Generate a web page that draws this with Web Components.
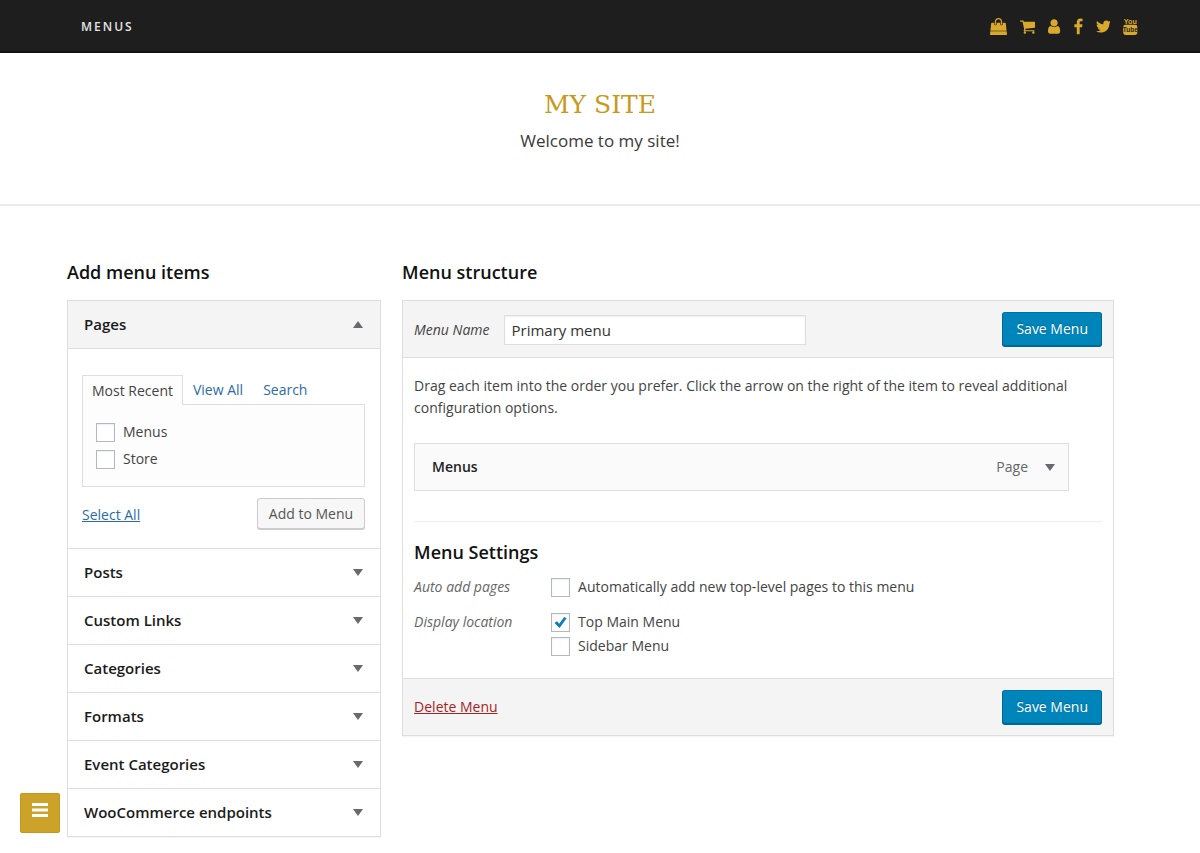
<!DOCTYPE html>
<html lang="en">
<head>
  <meta charset="utf-8">
  <meta name="viewport" content="width=device-width, initial-scale=1">
  <title>Menus</title>
  <style>
    body {
      margin: 0;
      background: #fff;
      color: #444;
      font: 14px/22px "Open Sans", "Noto Sans", sans-serif;
      --gold: #d9a92b;
      --line: #dedede;
      --link: #2a6ca8;
    }
  </style>
</head>
<body>
  <site-topbar>Menus</site-topbar>
  <site-header>
    <span slot="title">MY SITE</span>
    Welcome to my site!
  </site-header>
  <menu-editor></menu-editor>
  <panel-toggle></panel-toggle>

  <script>
    class BaseElement extends HTMLElement {
      constructor() {
        super();
        this.attachShadow({ mode: "open" });
      }

      connectedCallback() {
        this.shadowRoot.innerHTML = `
          <style>
            * { box-sizing: border-box; }
            a { color: inherit; }
            ${this.styles()}
          </style>
          ${this.html()}
        `;
      }

      styles() {
        return "";
      }

      html() {
        return "<slot></slot>";
      }
    }

    class SiteTopbar extends BaseElement {
      styles() {
        return `
          :host {
            display: flex;
            align-items: center;
            justify-content: space-between;
            box-sizing: border-box;
            height: 53px;
            padding: 2px 62px 0 81px;
            background: #1e1e1e;
            border-bottom: 2px solid #141414;
          }
          a {
            color: #e4e4e4;
            font-size: 12px;
            font-weight: 600;
            letter-spacing: 2px;
            text-transform: uppercase;
            text-decoration: none;
          }
        `;
      }

      html() {
        return `<a href="#menus"><slot></slot></a><social-links></social-links>`;
      }
    }

    class SocialLinks extends BaseElement {
      styles() {
        return `
          :host { display: flex; }
          nav { display: flex; gap: 13px; }
          a { display: flex; color: var(--gold); }
          svg { display: block; height: 17px; fill: currentColor; }
          text {
            font: bold 760px "Liberation Sans", sans-serif;
            text-anchor: middle;
          }
          .cut { fill: #1e1e1e; font-size: 680px; }
        `;
      }

      html() {
        const icons = {
          Store: ["0 0 1792 1792", `<path d="M1757 1408l35 313q3 28-16 50-19 21-48 21h-1664q-29 0-48-21-19-22-16-50l35-313h1722zm-93-839l86 775h-1708l86-775q3-24 21-40.5t43-16.5h256v128q0 53 37.5 90.5t90.5 37.5 90.5-37.5 37.5-90.5v-128h384v128q0 53 37.5 90.5t90.5 37.5 90.5-37.5 37.5-90.5v-128h256q25 0 43 16.5t21 40.5zm-384-185v256q0 26-19 45t-45 19-45-19-19-45v-256q0-106-75-181t-181-75-181 75-75 181v256q0 26-19 45t-45 19-45-19-19-45v-256q0-159 112.5-271.5t271.5-112.5 271.5 112.5 112.5 271.5z"/>`],
          Cart: ["64 0 1664 1792", `<path d="M704 1536q0 52-38 90t-90 38-90-38-38-90 38-90 90-38 90 38 38 90zm896 0q0 52-38 90t-90 38-90-38-38-90 38-90 90-38 90 38 38 90zm128-1088v512q0 24-16.5 42.5t-40.5 21.5l-1044 122q13 60 13 70 0 16-24 64h920q26 0 45 19t19 45-19 45-45 19h-1024q-26 0-45-19t-19-45q0-11 8-31.5t16-36 21.5-40 15.5-29.5l-177-823h-204q-26 0-45-19t-19-45 19-45 45-19h256q16 0 28.5 6.5t19.5 15.5 13 24.5 8 26 5.5 29.5 4.5 26h1201q26 0 45 19t19 45z"/>`],
          Account: ["256 0 1280 1792", `<path d="M1536 1399q0 109-62.5 187t-150.5 78h-854q-88 0-150.5-78t-62.5-187q0-85 8.5-160.5t31.5-152 58.5-131 94-89 134.5-34.5q131 128 313 128t313-128q76 0 134.5 34.5t94 89 58.5 131 31.5 152 8.5 160.5zm-256-887q0 159-112.5 271.5t-271.5 112.5-271.5-112.5-112.5-271.5 112.5-271.5 271.5-112.5 271.5 112.5 112.5 271.5z"/>`],
          Facebook: ["440 -60 940 1792", `<path d="M1343 12v264h-157q-86 0-116 36t-30 108v189h293l-39 296h-254v759h-306v-759h-255v-296h255v-218q0-186 104-288.5t277-102.5q147 0 228 12z"/>`],
          Twitter: ["108 0 1576 1792", `<path d="M1684 408q-67 98-162 167 1 14 1 42 0 130-38 259.5t-115.5 248.5-184.5 210.5-258 146-323 54.5q-271 0-496-145 35 4 78 4 225 0 401-138-105-2-188-64.5t-114-159.5q33 5 61 5 43 0 85-11-112-23-185.5-111.5t-73.5-205.5v-4q68 38 146 41-66-44-105-115t-39-154q0-88 44-163 121 149 294.5 238.5t371.5 99.5q-8-38-8-74 0-134 94.5-228.5t228.5-94.5q140 0 236 102 109-21 205-78-37 115-142 178 93-10 186-50z"/>`],
          YouTube: ["128 0 1536 1792", `<text x="896" y="620">You</text><rect x="150" y="720" width="1490" height="1060" rx="220"/><text class="cut" x="896" y="1500">Tube</text>`],
        };

        return `
          <nav aria-label="Account and social">
            ${Object.entries(icons)
              .map(
                ([name, [box, shape]]) =>
                  `<a href="#${name.toLowerCase()}" aria-label="${name}"><svg viewBox="${box}" aria-hidden="true">${shape}</svg></a>`
              )
              .join("")}
          </nav>
        `;
      }
    }

    class SiteHeader extends BaseElement {
      styles() {
        return `
          :host {
            display: block;
            padding: 37px 20px 50px;
            border-bottom: 2px solid #ececec;
            text-align: center;
          }
          h1 {
            margin: 0 0 8px;
            color: #c8991a;
            font: 25px/30px "DejaVu Serif", serif;
          }
          p { margin: 0; color: #3a3a3a; font-size: 17px; line-height: 26px; }
        `;
      }

      html() {
        return `<h1><slot name="title"></slot></h1><p><slot></slot></p>`;
      }
    }

    class MenuEditor extends BaseElement {
      styles() {
        return `
          :host {
            display: grid;
            grid-template-columns: 30% minmax(0, 1fr);
            align-items: start;
            gap: 21px;
            padding: 53px 86px 16px 67px;
          }
          h2 {
            margin: 0 0 15px;
            color: #111;
            font-size: 18px;
            font-weight: 600;
            line-height: 26px;
          }
          .list { border: 1px solid var(--line); border-bottom: 0; box-shadow: 0 1px 1px #0000000a; }
        `;
      }

      html() {
        const closed = [
          "Posts",
          "Custom Links",
          "Categories",
          "Formats",
          "Event Categories",
          "WooCommerce endpoints",
        ];

        return `
          <section>
            <h2>Add menu items</h2>
            <div class="list">
              <accordion-item open>
                <span slot="title">Pages</span>
                <page-picker></page-picker>
              </accordion-item>
              ${closed
                .map((title) => `<accordion-item><span slot="title">${title}</span></accordion-item>`)
                .join("")}
            </div>
          </section>
          <section>
            <h2>Menu structure</h2>
            <menu-structure></menu-structure>
          </section>
        `;
      }
    }

    class ArrowIcon extends BaseElement {
      styles() {
        return `
          :host { display: block; flex: none; }
          :host([up]) { transform: rotate(180deg); }
          svg { display: block; width: 10px; height: 7px; fill: #666a6e; }
        `;
      }

      html() {
        return `<svg viewBox="0 0 10 7" aria-hidden="true"><path d="M0 0h10L5 7z"/></svg>`;
      }
    }

    class AccordionItem extends BaseElement {
      connectedCallback() {
        super.connectedCallback();
        this.shadowRoot.querySelector("button").addEventListener("click", () => {
          this.toggleAttribute("open");
          this.update();
        });
        this.update();
      }

      update() {
        const open = this.hasAttribute("open");
        this.shadowRoot.querySelector("button").setAttribute("aria-expanded", open);
        this.shadowRoot.querySelector("arrow-icon").toggleAttribute("up", open);
      }

      styles() {
        return `
          :host { display: block; }
          h3 { margin: 0; border-bottom: 1px solid var(--line); }
          button {
            display: flex;
            align-items: center;
            justify-content: space-between;
            width: 100%;
            height: 47px;
            padding: 0 17px 0 16px;
            border: 0;
            background: #fff;
            color: #1b1b1b;
            font: inherit;
            font-size: 15px;
            font-weight: 600;
            cursor: pointer;
          }
          .title { padding-bottom: 2px; }
          .body { display: none; border-bottom: 1px solid var(--line); }
          :host([open]) button { background: #f4f4f4; }
          :host([open]) .body { display: block; }
        `;
      }

      html() {
        return `
          <h3><button type="button"><span class="title"><slot name="title"></slot></span><arrow-icon></arrow-icon></button></h3>
          <div class="body"><slot></slot></div>
        `;
      }
    }

    class PagePicker extends BaseElement {
      styles() {
        return `
          :host { display: block; padding: 26px 15px 19px 14px; }
          .tabs { display: flex; }
          .tabs button {
            height: 29px;
            padding: 0 9px;
            border: 1px solid transparent;
            border-bottom: 0;
            background: none;
            color: var(--link);
            font: inherit;
            cursor: pointer;
          }
          .tabs button[aria-selected="true"] {
            margin-bottom: -1px;
            height: 30px;
            border-color: var(--line);
            background: #fdfdfd;
            color: #444;
            z-index: 1;
          }
          .panel {
            display: grid;
            gap: 5px;
            padding: 16px 13px;
            border: 1px solid var(--line);
            background: #fdfdfd;
          }
          .actions {
            display: flex;
            align-items: center;
            justify-content: space-between;
            margin-top: 11px;
          }
          .actions a { padding-top: 2px; color: var(--link); }
        `;
      }

      html() {
        return `
          <div class="tabs" role="tablist">
            <button type="button" role="tab" aria-selected="true">Most Recent</button>
            <button type="button" role="tab" aria-selected="false">View All</button>
            <button type="button" role="tab" aria-selected="false">Search</button>
          </div>
          <div class="panel" role="tabpanel">
            <check-field>Menus</check-field>
            <check-field>Store</check-field>
          </div>
          <div class="actions">
            <a href="#select-all">Select All</a>
            <action-button>Add to Menu</action-button>
          </div>
        `;
      }
    }

    class CheckField extends BaseElement {
      styles() {
        return `
          :host { display: block; }
          label { display: flex; align-items: center; gap: 8px; min-height: 22px; }
          input {
            appearance: none;
            flex: none;
            width: 19px;
            height: 19px;
            margin: 0;
            border: 1px solid #b4b9be;
            background: #fff;
            box-shadow: inset 0 1px 2px #00000012;
          }
          .box { display: grid; flex: none; }
          .box > * { grid-area: 1 / 1; }
          svg {
            display: none;
            place-self: center;
            width: 13px;
            height: 13px;
            fill: #0a7dba;
            pointer-events: none;
          }
          input:checked + svg { display: block; }
        `;
      }

      html() {
        return `
          <label>
            <span class="box">
              <input type="checkbox" ${this.hasAttribute("checked") ? "checked" : ""}>
              <svg viewBox="0 0 13 13" aria-hidden="true"><path d="M0.5 7L3 5.2l2.2 2.6L10.2 1l2.4 1.2L5.6 12z"/></svg>
            </span>
            <span><slot></slot></span>
          </label>
        `;
      }
    }

    class ActionButton extends BaseElement {
      styles() {
        return `
          :host { display: block; flex: none; }
          button {
            display: block;
            height: 31px;
            padding: 0 11px;
            border: 1px solid #ccc;
            border-radius: 3px;
            background: #f7f7f7;
            box-shadow: 0 1px 0 #ccc;
            color: #555;
            font: inherit;
            cursor: pointer;
          }
          :host([primary]) button {
            height: 34px;
            padding: 0 13px;
            border-color: #0073aa #006799 #006799;
            background: #0085ba;
            box-shadow: 0 1px 0 #006799;
            color: #fff;
            text-shadow: 0 -1px 1px #006799;
          }
        `;
      }

      html() {
        return `<button type="button"><slot></slot></button>`;
      }
    }

    class MenuStructure extends BaseElement {
      styles() {
        return `
          :host {
            display: block;
            border: 1px solid var(--line);
            box-shadow: 0 1px 1px #0000000a;
          }
          .bar {
            display: flex;
            align-items: center;
            justify-content: space-between;
            height: 56px;
            padding: 0 11px;
            background: #f4f4f4;
          }
          .name { display: flex; align-items: center; gap: 14px; padding-top: 2px; }
          .name label { font-style: italic; }
          .name input {
            width: 302px;
            height: 30px;
            padding: 0 7px;
            border: 1px solid var(--line);
            background: #fff;
            box-shadow: inset 0 1px 2px #00000012;
            color: #333;
            font: inherit;
            font-size: 15px;
          }
          .body {
            padding: 17px 11px 21px;
            border: solid var(--line);
            border-width: 1px 0;
          }
          p { margin: 0 0 24px; }
          hr { margin: 30px 0 18px; border: 0; border-top: 1px solid #eee; }
          h3 { margin: 0 0 12px; color: #111; font-size: 18px; font-weight: 600; line-height: 24px; }
          .settings { display: grid; gap: 13px; }
          fieldset {
            display: grid;
            grid-template-columns: 137px minmax(0, 1fr);
            margin: 0;
            padding: 0;
            border: 0;
          }
          legend { float: left; padding: 0; color: #666; font-style: italic; }
          .choices { display: grid; gap: 2px; }
          .delete { color: #a62426; }
        `;
      }

      html() {
        return `
          <div class="bar">
            <div class="name">
              <label for="menu-name">Menu Name</label>
              <input id="menu-name" type="text" value="Primary menu">
            </div>
            <action-button primary>Save Menu</action-button>
          </div>
          <div class="body">
            <p>Drag each item into the order you prefer. Click the arrow on the right of the item to reveal additional configuration options.</p>
            <menu-entry type="Page">Menus</menu-entry>
            <hr>
            <h3>Menu Settings</h3>
            <div class="settings">
              <fieldset>
                <legend>Auto add pages</legend>
                <div class="choices">
                  <check-field>Automatically add new top-level pages to this menu</check-field>
                </div>
              </fieldset>
              <fieldset>
                <legend>Display location</legend>
                <div class="choices">
                  <check-field checked>Top Main Menu</check-field>
                  <check-field>Sidebar Menu</check-field>
                </div>
              </fieldset>
            </div>
          </div>
          <div class="bar">
            <a class="delete" href="#delete">Delete Menu</a>
            <action-button primary>Save Menu</action-button>
          </div>
        `;
      }
    }

    class MenuEntry extends BaseElement {
      styles() {
        return `
          :host {
            display: flex;
            align-items: center;
            justify-content: space-between;
            box-sizing: border-box;
            height: 48px;
            margin-right: 33px;
            padding: 0 13px 0 17px;
            border: 1px solid var(--line);
            background: #fafafa;
          }
          strong { color: #222; font-weight: 600; }
          .type { display: flex; align-items: center; gap: 17px; color: #666; }
          button { padding: 0; border: 0; background: none; cursor: pointer; }
        `;
      }

      html() {
        return `
          <strong><slot></slot></strong>
          <span class="type">
            ${this.getAttribute("type")}
            <button type="button" aria-label="Edit item"><arrow-icon></arrow-icon></button>
          </span>
        `;
      }
    }

    class PanelToggle extends BaseElement {
      styles() {
        return `
          :host { position: fixed; left: 20px; bottom: 20px; }
          button {
            display: grid;
            justify-content: center;
            width: 40px;
            height: 40px;
            padding: 9px 0 0;
            border: 1px solid #c5981d;
            border-radius: 2px;
            background: #cca229;
            cursor: pointer;
          }
          svg { display: block; width: 16px; height: 14px; fill: #fff; }
        `;
      }

      html() {
        return `
          <button type="button" aria-label="Open panel">
            <svg viewBox="0 0 16 14" aria-hidden="true"><path d="M0 0h16v3H0zM0 5.500h16v3H0zM0 11h16v3H0z"/></svg>
          </button>
        `;
      }
    }

    customElements.define("site-topbar", SiteTopbar);
    customElements.define("social-links", SocialLinks);
    customElements.define("site-header", SiteHeader);
    customElements.define("menu-editor", MenuEditor);
    customElements.define("arrow-icon", ArrowIcon);
    customElements.define("accordion-item", AccordionItem);
    customElements.define("page-picker", PagePicker);
    customElements.define("check-field", CheckField);
    customElements.define("action-button", ActionButton);
    customElements.define("menu-structure", MenuStructure);
    customElements.define("menu-entry", MenuEntry);
    customElements.define("panel-toggle", PanelToggle);
  </script>
</body>
</html>
